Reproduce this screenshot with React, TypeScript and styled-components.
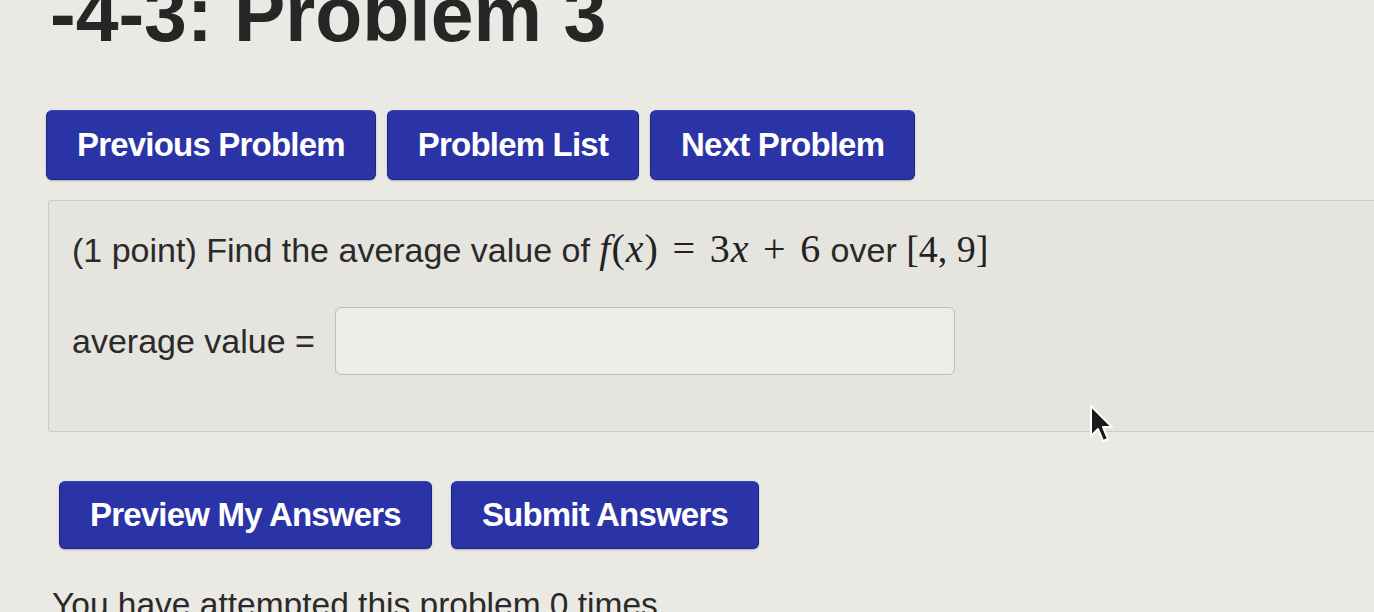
import React from "react";
import styled, { createGlobalStyle } from "styled-components";

const GlobalStyle = createGlobalStyle`
  html, body {
    margin: 0;
    padding: 0;
    background: #eae9e4;
    overflow: hidden;
  }
  body {
    font-family: "Liberation Sans", Arial, Helvetica, sans-serif;
    color: #2b2b2b;
  }
`;

const Page = styled.div`
  position: relative;
  width: 1374px;
  height: 612px;
  overflow: hidden;
  padding-left: 46px;
  box-sizing: border-box;
`;

const Title = styled.h1`
  margin: -24px 0 0 4px;
  font-size: 77px;
  line-height: 77px;
  font-weight: 700;
  color: #262626;
  white-space: nowrap;
`;

const NavRow = styled.div`
  display: flex;
  gap: 11px;
  margin-top: 57px;
  align-items: flex-start;
`;

const BlueButton = styled.button<{ $tall?: number }>`
  height: ${(p) => p.$tall ?? 70}px;
  padding: 0 30px;
  background: #2b34a7;
  border: 1px solid #1f2786;
  border-top-color: #3a44b8;
  border-radius: 6px;
  color: #ffffff;
  font-family: "Liberation Sans", Arial, Helvetica, sans-serif;
  font-size: 33px;
  font-weight: 700;
  letter-spacing: -0.8px;
  white-space: nowrap;
  box-shadow: 0 1px 2px rgba(0, 0, 0, 0.25);
  cursor: pointer;
`;

const ProblemPanel = styled.div`
  margin-top: 20px;
  margin-left: 2px;
  width: 1400px;
  height: 232px;
  box-sizing: border-box;
  padding: 27px 24px 0 23px;
  background: #e5e4df;
  border: 1px solid #cdccc6;
  border-right: none;
  border-radius: 3px 0 0 3px;
`;

const Statement = styled.p`
  margin: 0;
  font-size: 34px;
  line-height: 42px;
  color: #2a2a2a;
  white-space: nowrap;
`;

const MathSpan = styled.span<{ $size?: number; $spacing?: number }>`
  font-family: "Liberation Serif", "Times New Roman", serif;
  font-size: ${(p) => p.$size ?? 40}px;
  letter-spacing: ${(p) => p.$spacing ?? 0}px;
  color: #222;
`;

const MathVar = styled.i`
  font-style: italic;
`;

const MathOp = styled.span`
  margin: 0 0.34em;
`;

const AnswerRow = styled.div`
  display: flex;
  align-items: center;
  margin-top: 36px;
  gap: 20px;
`;

const Label = styled.label`
  font-size: 34px;
  line-height: 42px;
  color: #2a2a2a;
  white-space: nowrap;
`;

const AnswerInput = styled.input`
  width: 620px;
  height: 68px;
  box-sizing: border-box;
  background: #edece8;
  border: 1.5px solid #bdbcb7;
  border-radius: 6px;
  font-size: 28px;
  padding: 0 12px;
  outline: none;
`;

const SubmitRow = styled.div`
  display: flex;
  gap: 19px;
  margin-top: 49px;
  margin-left: 13px;
`;

const Attempts = styled.p`
  margin: 35px 0 0 6px;
  font-size: 33.5px;
  line-height: 42px;
  color: #2a2a2a;
  white-space: nowrap;
`;

const Pointer = styled.svg`
  position: absolute;
  left: 1088px;
  top: 404px;
  width: 26px;
  height: 42px;
`;

export default function App() {
  return (
    <>
      <GlobalStyle />
      <Page>
        <Title>-4-3: Problem 3</Title>
        <NavRow>
          <BlueButton>Previous Problem</BlueButton>
          <BlueButton>Problem List</BlueButton>
          <BlueButton>Next Problem</BlueButton>
        </NavRow>
        <ProblemPanel>
          <Statement>
            (1 point) Find the average value of{" "}
            <MathSpan $spacing={1}>
              <MathVar>f</MathVar>(<MathVar>x</MathVar>)<MathOp>=</MathOp>3
              <MathVar>x</MathVar>
              <MathOp>+</MathOp>6
            </MathSpan>{" "}
            over <MathSpan $size={38}>[4, 9]</MathSpan>
          </Statement>
          <AnswerRow>
            <Label htmlFor="ans">average value =</Label>
            <AnswerInput id="ans" type="text" />
          </AnswerRow>
        </ProblemPanel>
        <SubmitRow>
          <BlueButton $tall={68}>Preview My Answers</BlueButton>
          <BlueButton $tall={68}>Submit Answers</BlueButton>
        </SubmitRow>
        <Attempts>You have attempted this problem 0 times.</Attempts>
        <Pointer viewBox="0 0 26 42">
          <path
            d="M3 2 L3 32 L10 25 L15 37 L20 35 L15 23 L24 23 Z"
            fill="#1b1b1b"
            stroke="#ffffff"
            strokeWidth="2"
            strokeLinejoin="round"
          />
        </Pointer>
      </Page>
    </>
  );
}
